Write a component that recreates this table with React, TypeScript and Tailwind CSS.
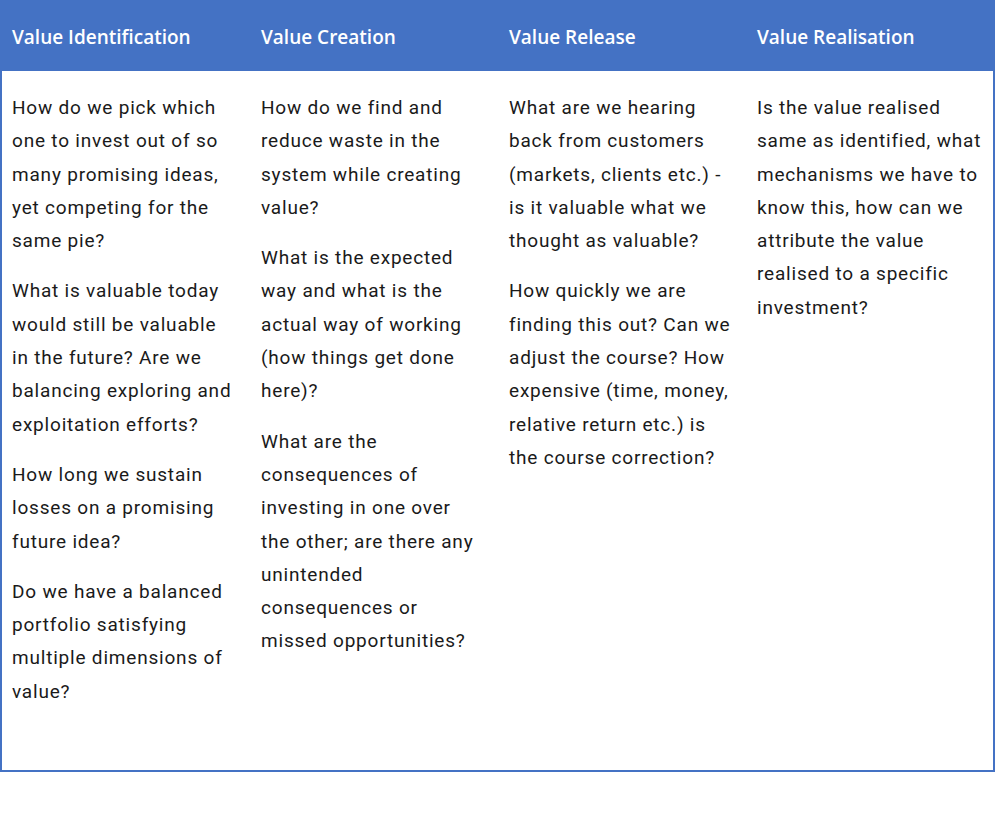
import React from "react";

const cols: { title: string; paras: string[][] }[] = [
  {
    title: "Value Identification",
    paras: [
      ["How do we pick which", "one to invest out of so", "many promising ideas,", "yet competing for the", "same pie?"],
      ["What is valuable today", "would still be valuable", "in the future? Are we", "balancing exploring and", "exploitation efforts?"],
      ["How long we sustain", "losses on a promising", "future idea?"],
      ["Do we have a balanced", "portfolio satisfying", "multiple dimensions of", "value?"],
    ],
  },
  {
    title: "Value Creation",
    paras: [
      ["How do we find and", "reduce waste in the", "system while creating", "value?"],
      ["What is the expected", "way and what is the", "actual way of working", "(how things get done", "here)?"],
      ["What are the", "consequences of", "investing in one over", "the other; are there any", "unintended", "consequences or", "missed opportunities?"],
    ],
  },
  {
    title: "Value Release",
    paras: [
      ["What are we hearing", "back from customers", "(markets, clients etc.) -", "is it valuable what we", "thought as valuable?"],
      ["How quickly we are", "finding this out? Can we", "adjust the course? How", "expensive (time, money,", "relative return etc.) is", "the course correction?"],
    ],
  },
  {
    title: "Value Realisation",
    paras: [
      ["Is the value realised", "same as identified, what", "mechanisms we have to", "know this, how can we", "attribute the value", "realised to a specific", "investment?"],
    ],
  },
];

export default function App() {
  return (
    <div className="w-[996px] h-[839px] bg-white">
      <div className="w-[995px] h-[772px] border-2 border-[#4472C4] flex flex-col">
        <div
          className="h-[71px] bg-[#4472C4] grid grid-cols-[249px_248px_248px_1fr] items-center -mt-[2px] -mx-[2px] pt-[4px] px-[2px]"
          style={{ fontFamily: '"Open Sans", "Liberation Sans", sans-serif' }}
        >
          {cols.map((c) => (
            <div key={c.title} className="px-[10px] text-white text-[19px] font-semibold">
              {c.title}
            </div>
          ))}
        </div>
        <div
          className="grid grid-cols-[249px_248px_248px_1fr] pt-[20px]"
          style={{ fontFamily: 'Roboto, "Liberation Sans", sans-serif' }}
        >
          {cols.map((c) => (
            <div key={c.title} className="px-[10px] flex flex-col gap-[17px]">
              {c.paras.map((p, i) => (
                <p
                  key={i}
                  className="text-[19px] leading-[33.3px] tracking-[0.8px] text-[#1a1a1a]"
                >
                  {p.map((line, j) => (
                    <span key={j} className="block whitespace-nowrap">
                      {line}
                    </span>
                  ))}
                </p>
              ))}
            </div>
          ))}
        </div>
      </div>
    </div>
  );
}
